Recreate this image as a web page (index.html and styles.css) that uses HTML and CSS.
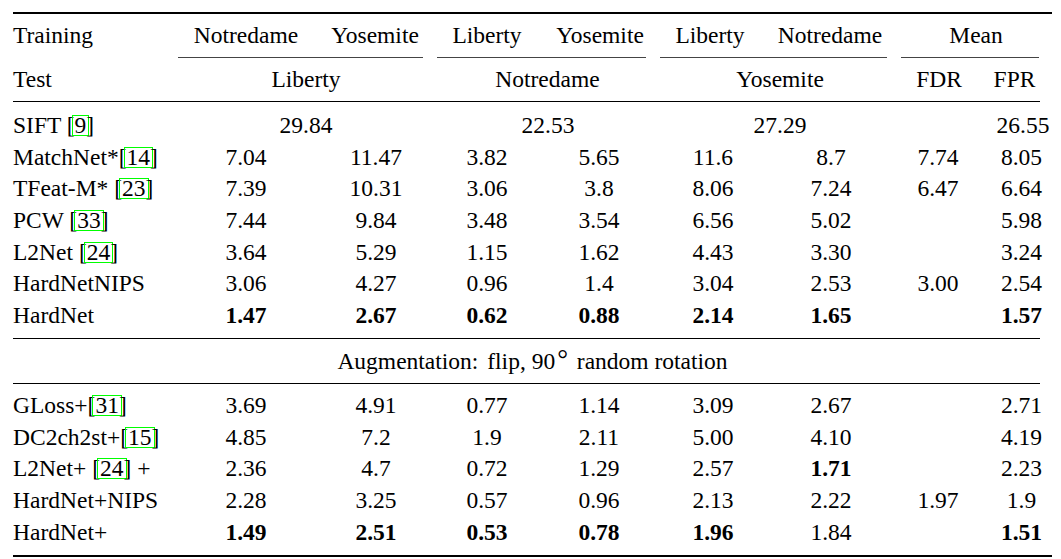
FILE: index.html
```html
<!DOCTYPE html>
<html>
<head>
<meta charset="utf-8">
<link rel="stylesheet" href="styles.css">
</head>
<body>
<div class="table">
  <div class="rule heavy"></div>

  <div class="row head">
    <div class="lab">Training</div>
    <div>Notredame</div>
    <div class="pl8">Yosemite</div>
    <div>Liberty</div>
    <div class="pl2">Yosemite</div>
    <div class="pr6">Liberty</div>
    <div class="pl4">Notredame</div>
    <div class="span2 pl15">Mean</div>
  </div>

  <div class="row cmid">
    <div></div>
    <div class="span2"><div class="cline c1"></div></div>
    <div class="span2"><div class="cline c2"></div></div>
    <div class="span2"><div class="cline c3"></div></div>
    <div class="span2"><div class="cline c4"></div></div>
  </div>

  <div class="row head">
    <div class="lab">Test</div>
    <div class="span2">Liberty</div>
    <div class="span2 pl9">Notredame</div>
    <div class="span2 pl20">Yosemite</div>
    <div class="pl13">FDR</div>
    <div class="pr3">FPR</div>
  </div>

  <div class="rule mid top-gap"></div>

  <div class="row sift">
    <div class="lab">SIFT [<span class="cite">9</span>]</div>
    <div class="span2">29.84</div>
    <div class="span2 pl10">22.53</div>
    <div class="span2 pl20">27.29</div>
    <div></div>
    <div class="pl14">26.55</div>
  </div>

  <div class="row data">
    <div class="lab">MatchNet*[<span class="cite">14</span>]</div>
    <div>7.04</div><div>11.47</div><div>3.82</div><div>5.65</div><div>11.6</div><div>8.7</div><div>7.74</div><div>8.05</div>
  </div>
  <div class="row data">
    <div class="lab">TFeat-M* [<span class="cite">23</span>]</div>
    <div>7.39</div><div>10.31</div><div>3.06</div><div>3.8</div><div>8.06</div><div>7.24</div><div>6.47</div><div>6.64</div>
  </div>
  <div class="row data">
    <div class="lab">PCW [<span class="cite">33</span>]</div>
    <div>7.44</div><div>9.84</div><div>3.48</div><div>3.54</div><div>6.56</div><div>5.02</div><div></div><div>5.98</div>
  </div>
  <div class="row data">
    <div class="lab">L2Net [<span class="cite">24</span>]</div>
    <div>3.64</div><div>5.29</div><div>1.15</div><div>1.62</div><div>4.43</div><div>3.30</div><div></div><div>3.24</div>
  </div>
  <div class="row data">
    <div class="lab">HardNetNIPS</div>
    <div>3.06</div><div>4.27</div><div>0.96</div><div>1.4</div><div>3.04</div><div>2.53</div><div>3.00</div><div>2.54</div>
  </div>
  <div class="row data">
    <div class="lab">HardNet</div>
    <div class="b">1.47</div><div class="b">2.67</div><div class="b">0.62</div><div class="b">0.88</div><div class="b">2.14</div><div class="b">1.65</div><div></div><div class="b">1.57</div>
  </div>

  <div class="rule mid aug-before"></div>
  <div class="row aug">
    <div class="span9">Augmentation:<span class="colsp"></span> flip, 90<span class="deg">°</span> random rotation</div>
  </div>
  <div class="rule mid aug-after"></div>

  <div class="row data">
    <div class="lab">GLoss+[<span class="cite">31</span>]</div>
    <div>3.69</div><div>4.91</div><div>0.77</div><div>1.14</div><div>3.09</div><div>2.67</div><div></div><div>2.71</div>
  </div>
  <div class="row data">
    <div class="lab">DC2ch2st+[<span class="cite">15</span>]</div>
    <div>4.85</div><div>7.2</div><div>1.9</div><div>2.11</div><div>5.00</div><div>4.10</div><div></div><div>4.19</div>
  </div>
  <div class="row data">
    <div class="lab">L2Net+ [<span class="cite">24</span>] +</div>
    <div>2.36</div><div>4.7</div><div>0.72</div><div>1.29</div><div>2.57</div><div class="b">1.71</div><div></div><div>2.23</div>
  </div>
  <div class="row data">
    <div class="lab">HardNet+NIPS</div>
    <div>2.28</div><div>3.25</div><div>0.57</div><div>0.96</div><div>2.13</div><div>2.22</div><div>1.97</div><div>1.9</div>
  </div>
  <div class="row data">
    <div class="lab">HardNet+</div>
    <div class="b">1.49</div><div class="b">2.51</div><div class="b">0.53</div><div class="b">0.78</div><div class="b">1.96</div><div>1.84</div><div></div><div class="b">1.51</div>
  </div>

  <div class="rule heavy bottom-gap"></div>
</div>
</body>
</html>
```

FILE: styles.css
```css
html, body {
  margin: 0;
  padding: 0;
  background: #ffffff;
}

body {
  font-family: "Liberation Serif", "Times New Roman", serif;
  font-size: 23.5px;
  color: #000;
}

.table {
  width: 1039px;
  margin-left: 13px;
  padding-top: 12px;
}

.rule {
  background: #000;
}

.rule.heavy {
  height: 2px;
  width: 1039px;
}

.rule.mid {
  height: 1px;
  width: 1027px;
}

.top-gap { margin-bottom: 8px; }
.aug-before { margin-top: 6px; }
.aug-after { margin-bottom: 6px; }
.bottom-gap { margin-top: 6.5px; }

.row {
  display: grid;
  grid-template-columns: 168px 130px 120px 112px 112px 116px 114px 95px 72px;
}

.row > div {
  text-align: center;
  white-space: nowrap;
}

.row > .lab {
  text-align: left;
}

.span2 { grid-column: span 2; }
.span9 { grid-column: 1 / -1; }

.head {
  height: 43px;
  line-height: 43px;
}

.cmid {
  height: 1px;
}

.cline {
  height: 1px;
  background: #444;
}

.c1 { margin: 0 8px 0 -3px; }
.c2 { margin: 0 9px 0 6px; }
.c3 { margin: 0 -2px 0 5px; }
.c4 { margin: 0 13px 0 16px; }

.sift, .data {
  height: 31.7px;
  line-height: 31.7px;
}

.aug {
  height: 44px;
  line-height: 44px;
}

.colsp {
  display: inline-block;
  width: 3px;
}

.deg {
  display: inline-block;
  font-size: 1.15em;
  line-height: 0;
  margin: 0 3px 0 2px;
  vertical-align: 1px;
}

.data > :nth-child(3) { padding-left: 10px; }
.data > :nth-child(7) { padding-left: 6px; }
.data > :nth-child(8) { padding-left: 11px; }
.data > :nth-child(9) { padding-left: 11px; }

.pl2 { padding-left: 2px; }
.pl4 { padding-left: 4px; }
.pl8 { padding-left: 8px; }
.pl9 { padding-left: 9px; }
.pl10 { padding-left: 10px; }
.pl13 { padding-left: 13px; }
.pl14 { padding-left: 14px; }
.pl15 { padding-left: 15px; }
.pl20 { padding-left: 20px; }
.pr3 { padding-right: 3px; }
.pr6 { padding-right: 6px; }

.b {
  font-weight: bold;
}

.cite {
  display: inline-block;
  line-height: 19px;
  border: 1px solid #00ff00;
  padding: 0 2px;
  margin: 0 -3px;
}
```
